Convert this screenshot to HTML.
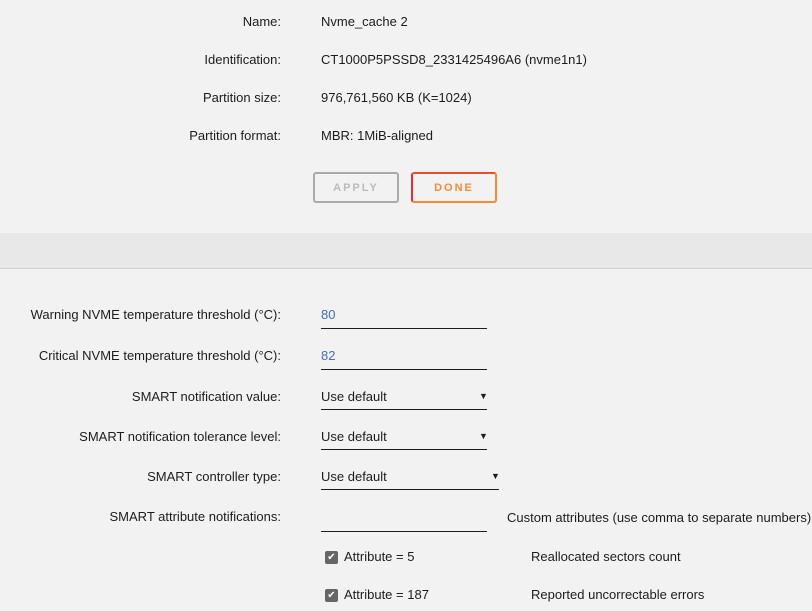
<!DOCTYPE html>
<html><head><style>
body{margin:0;width:812px;height:611px;background:#f2f2f2;font-family:"Liberation Sans",sans-serif;font-size:13px;color:#1c1c1c;position:relative;overflow:hidden}
.a{position:absolute;white-space:nowrap}
.l{right:531px;text-align:right}
.band{position:absolute;left:0;top:233px;width:812px;height:35px;background:#e8e8e8;border-bottom:1px solid #d2d2d2}
.u{position:absolute;height:1px;background:#1c1c1c}
.btn{position:absolute;top:172px;height:27px;width:82px;border:2px solid #aaa;border-radius:3px;font-size:11px;font-weight:bold;letter-spacing:2px;text-align:center;line-height:28px}
.cb{position:absolute;width:13px;height:13px;background:#666;border-radius:2px;color:#fff;font-size:10px;line-height:13px;text-align:center}
.arr{position:absolute;font-size:9px}
</style></head><body>
<div class="a l" style="top:14px">Name:</div><div class="a" style="left:321px;top:14px">Nvme_cache 2</div>
<div class="a l" style="top:52px">Identification:</div><div class="a" style="left:321px;top:52px">CT1000P5PSSD8_2331425496A6 (nvme1n1)</div>
<div class="a l" style="top:90px">Partition size:</div><div class="a" style="left:321px;top:90px">976,761,560 KB (K=1024)</div>
<div class="a l" style="top:128px">Partition format:</div><div class="a" style="left:321px;top:128px">MBR: 1MiB-aligned</div>
<div class="btn" style="left:313px;color:#bbb;border-color:#aaa">APPLY</div>
<div class="btn" style="left:411px;color:#f5893a;border-color:#ec4a2c #f58a2e #f58a2e #e8302a">DONE</div>
<div class="band"></div>
<div class="a l" style="top:307px">Warning NVME temperature threshold (°C):</div><div class="a" style="left:321px;top:307px;color:#486dba">80</div><div class="u" style="left:321px;top:328px;width:166px"></div>
<div class="a l" style="top:348px">Critical NVME temperature threshold (°C):</div><div class="a" style="left:321px;top:348px;color:#486dba">82</div><div class="u" style="left:321px;top:369px;width:166px"></div>
<div class="a l" style="top:389px">SMART notification value:</div><div class="a" style="left:321px;top:389px">Use default</div><div class="arr" style="left:479px;top:391px">▼</div><div class="u" style="left:321px;top:409px;width:166px"></div>
<div class="a l" style="top:429px">SMART notification tolerance level:</div><div class="a" style="left:321px;top:429px">Use default</div><div class="arr" style="left:479px;top:431px">▼</div><div class="u" style="left:321px;top:449px;width:166px"></div>
<div class="a l" style="top:469px">SMART controller type:</div><div class="a" style="left:321px;top:469px">Use default</div><div class="arr" style="left:491px;top:471px">▼</div><div class="u" style="left:321px;top:489px;width:178px"></div>
<div class="a l" style="top:509px">SMART attribute notifications:</div><div class="u" style="left:321px;top:531px;width:166px"></div><div class="a" style="left:507px;top:510px">Custom attributes (use comma to separate numbers):</div>
<div class="cb" style="left:325px;top:551px">✔</div><div class="a" style="left:344px;top:549px">Attribute = 5</div><div class="a" style="left:531px;top:549px">Reallocated sectors count</div>
<div class="cb" style="left:325px;top:589px">✔</div><div class="a" style="left:344px;top:587px">Attribute = 187</div><div class="a" style="left:531px;top:587px">Reported uncorrectable errors</div>
</body></html>
